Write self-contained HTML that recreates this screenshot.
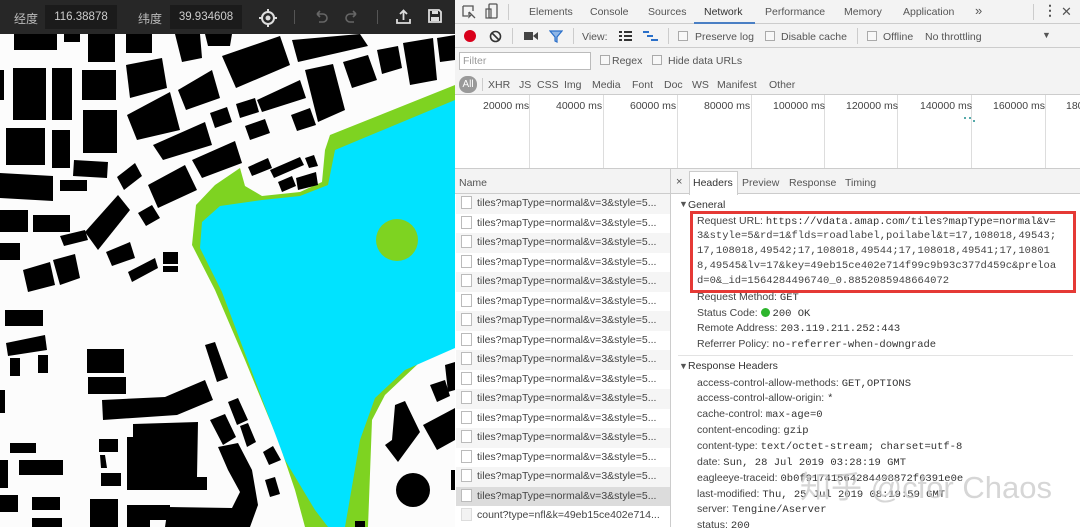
<!DOCTYPE html>
<html><head><meta charset="utf-8"><style>
*{margin:0;padding:0;box-sizing:border-box}
body{width:1080px;height:527px;overflow:hidden;position:relative;background:#fff;font-family:"Liberation Sans","Noto Sans CJK SC",sans-serif;font-size:10.5px;color:#333}
.a{position:absolute;white-space:nowrap}
.box{background:#1b1b1b;color:#ccc;height:24px;top:5px;line-height:24px;text-align:center;font-size:11.5px}
.lbl{color:#bbb;font-size:12px;top:10px}
.g{color:#555}
.cb{position:absolute;width:10px;height:10px;border:1px solid #aaa;background:#f8f8f8}
.row{position:absolute;left:456px;width:214px;height:19.5px;line-height:19.5px;color:#444;font-size:10.5px;padding-left:5px;white-space:nowrap;overflow:hidden}
.row i{display:inline-block;width:11px;height:13px;border:1px solid #bbb;background:#fff;vertical-align:-3px;margin-right:5px}
.m{font-family:"Liberation Mono",monospace;font-size:10.5px;color:#333}
.tl{position:absolute;top:100px;font-size:10.5px;color:#444}
.vl{position:absolute;top:95px;width:1px;height:73px;background:#ddd}
.kv{position:absolute;left:697px;font-size:10.5px;color:#444;white-space:nowrap}
</style></head><body>
<div class="a" style="left:0;top:0;width:455px;height:34px;background:#272727"></div>
<div class="a lbl" style="left:14px">经度</div>
<div class="a box" style="left:45px;width:72px">116.38878</div>
<div class="a lbl" style="left:138px">纬度</div>
<div class="a box" style="left:170px;width:72px">39.934608</div>
<svg class="a" style="left:258px;top:8px" width="20" height="20" viewBox="0 0 20 20"><circle cx="10" cy="10" r="6" fill="none" stroke="#ddd" stroke-width="2"/><circle cx="10" cy="10" r="2.5" fill="#ddd"/><path d="M10 1v4M10 15v4M1 10h4M15 10h4" stroke="#ddd" stroke-width="2"/></svg>
<div class="a" style="left:294px;top:10px;width:1px;height:14px;background:#555"></div>
<svg class="a" style="left:313px;top:9px" width="16" height="16" viewBox="0 0 16 16"><path d="M4 5h6a4 4 0 0 1 0 8H6M4 5l3-3M4 5l3 3" fill="none" stroke="#666" stroke-width="1.6"/></svg>
<svg class="a" style="left:344px;top:9px" width="16" height="16" viewBox="0 0 16 16"><path d="M12 5H6a4 4 0 0 0 0 8h4M12 5L9 2M12 5L9 8" fill="none" stroke="#666" stroke-width="1.6"/></svg>
<div class="a" style="left:377px;top:10px;width:1px;height:14px;background:#555"></div>
<svg class="a" style="left:395px;top:8px" width="17" height="17" viewBox="0 0 17 17"><path d="M8.5 12V3M5 6l3.5-3.5L12 6M2 11v4h13v-4" fill="none" stroke="#ddd" stroke-width="1.8"/></svg>
<svg class="a" style="left:427px;top:8px" width="16" height="16" viewBox="0 0 16 16"><path d="M2 2h10l2 2v10H2z" fill="none" stroke="#ddd" stroke-width="1.8"/><rect x="5" y="3" width="6" height="3" fill="#ddd"/><rect x="4" y="9" width="8" height="4" fill="#ddd"/></svg>

<svg class="a" style="left:0;top:34px" width="455" height="493" viewBox="0 34 455 493">
<rect x="0" y="34" width="455" height="493" fill="#fcfcfc"/>
<path d="M455 85L330 135L325 150L322 182L300 192L262 196L245 186L240 168L215 185L196 205L192 245L215 290L245 360L278 440L295 490L305 527L368 527L372 420L385 395L420 362L455 338Z" fill="#7ed321"/>
<path d="M455 100L335 150L328 185L300 196L262 200L220 206L202 222L200 248L222 292L252 372L285 460L315 510L328 527L345 527L360 440L375 398L405 370L455 348Z" fill="#00e3ff"/>
<circle cx="397" cy="240" r="21" fill="#7ed321"/>
<g fill="#000">
<rect x="14" y="34" width="43" height="16"/><rect x="64" y="34" width="16" height="8"/><rect x="88" y="34" width="27" height="28"/><rect x="126" y="34" width="26" height="19"/>
<polygon points="175,34 200,34 202,58 182,62"/><polygon points="205,34 232,34 230,46 208,46"/>
<polygon points="222,56 280,36 290,65 236,88"/><polygon points="292,40 360,34 368,46 298,62"/>
<polygon points="343,62 368,55 377,80 352,88"/><polygon points="377,50 398,46 402,68 382,74"/>
<polygon points="403,43 433,38 437,80 410,85"/><polygon points="437,38 455,35 455,60 440,62"/>
<rect x="0" y="70" width="4" height="30"/><rect x="13" y="68" width="33" height="52"/><rect x="52" y="68" width="20" height="52"/>
<rect x="82" y="70" width="34" height="30"/><rect x="83" y="110" width="34" height="43"/>
<rect x="6" y="128" width="39" height="37"/><rect x="52" y="130" width="18" height="38"/>
<polygon points="126,65 162,58 167,88 130,98"/><polygon points="127,115 170,92 180,130 137,140"/>
<polygon points="178,90 212,70 220,98 186,110"/><polygon points="305,70 333,64 345,110 318,122"/>
<polygon points="257,100 300,80 306,98 262,112"/><polygon points="210,113 227,107 232,122 215,128"/>
<polygon points="236,104 255,98 259,112 240,118"/><polygon points="245,126 265,119 270,133 250,140"/>
<polygon points="291,115 310,108 316,125 297,131"/><polygon points="153,145 205,122 212,145 163,160"/>
<polygon points="192,160 235,141 242,163 202,178"/><polygon points="148,185 185,165 197,190 158,208"/>
<polygon points="74,160 108,162 107,178 73,176"/><polygon points="0,173 53,176 53,201 0,198"/>
<rect x="60" y="180" width="27" height="11"/><polygon points="117,177 135,163 142,176 124,190"/>
<polygon points="85,232 118,195 130,210 98,250"/><polygon points="138,213 152,205 160,218 146,226"/>
<rect x="0" y="210" width="28" height="22"/><rect x="33" y="215" width="37" height="17"/>
<polygon points="248,167 268,158 272,168 252,176"/><polygon points="270,170 300,157 304,165 274,178"/><polygon points="278,182 292,176 296,186 282,192"/><polygon points="296,178 316,172 318,185 298,190"/><polygon points="305,158 314,155 318,166 309,168"/>
<rect x="0" y="243" width="20" height="17"/><polygon points="23,270 50,262 55,285 28,292"/><polygon points="53,260 75,254 80,278 60,285"/>
<polygon points="128,272 155,258 158,268 132,282"/><rect x="163" y="252" width="15" height="12"/><rect x="163" y="266" width="15" height="6"/>
<polygon points="106,252 130,242 135,258 112,266"/><polygon points="60,236 85,230 88,240 64,246"/>
<rect x="5" y="310" width="38" height="16"/><polygon points="6,343 45,335 47,350 8,356"/><rect x="10" y="358" width="10" height="18"/><rect x="38" y="355" width="10" height="18"/>
<rect x="87" y="349" width="37" height="24"/><rect x="88" y="377" width="38" height="17"/>
<polygon points="102,400 165,397 205,380 213,400 177,415 103,420"/><rect x="0" y="390" width="5" height="23"/>
<polygon points="205,345 215,342 228,378 217,382"/><polygon points="228,402 238,398 248,420 237,425"/>
<polygon points="210,420 225,414 236,437 223,445"/><polygon points="240,426 248,423 256,442 247,447"/>
<polygon points="133,424 198,422 197,477 207,477 207,490 127,490 127,437 133,437"/>
<rect x="99" y="439" width="19" height="13"/><polygon points="100,455 105,455 107,468 101,468"/><rect x="101" y="473" width="20" height="13"/>
<path d="M218 447L238 443L252 470L258 505L250 527L165 527L168 507L232 508L240 492L228 470Z"/>
<rect x="90" y="499" width="28" height="28"/><polygon points="127,505 170,505 170,520 150,520 150,527 127,527"/>
<rect x="10" y="443" width="26" height="10"/><rect x="19" y="460" width="44" height="15"/><rect x="0" y="460" width="8" height="28"/>
<rect x="0" y="495" width="18" height="17"/><rect x="32" y="497" width="28" height="13"/><rect x="32" y="518" width="30" height="9"/>
<polygon points="263,452 273,446 281,460 269,465"/><polygon points="265,480 275,477 280,494 270,497"/>
<polygon points="395,405 405,401 420,432 398,462 385,445 392,440"/><polygon points="430,385 445,380 450,396 437,402"/>
<polygon points="423,425 455,408 455,440 437,450"/><polygon points="445,365 455,362 455,390 448,392"/>
<circle cx="413" cy="490" r="17"/><rect x="451" y="470" width="4" height="20"/><rect x="355" y="521" width="10" height="6"/>
</g></svg>

<!-- devtools -->
<div class="a" style="left:455px;top:0;width:625px;height:24px;background:#f3f3f3;border-bottom:1px solid #ccc"></div>
<svg class="a" style="left:462px;top:5px" width="14" height="14"><path d="M1 1h10v5M1 1v10h5M7 7l6 6M7 7v5l2-2" fill="none" stroke="#555" stroke-width="1.3"/></svg>
<svg class="a" style="left:485px;top:3px" width="14" height="16"><rect x="4" y="1" width="8" height="14" rx="1" fill="none" stroke="#555" stroke-width="1.3"/><rect x="1" y="6" width="5" height="9" fill="none" stroke="#555" stroke-width="1.2"/></svg>
<div class="a" style="left:508px;top:4px;width:1px;height:16px;background:#ccc"></div>
<div class="a g" style="left:529px;top:6px">Elements</div>
<div class="a g" style="left:590px;top:6px">Console</div>
<div class="a g" style="left:648px;top:6px">Sources</div>
<div class="a" style="left:704px;top:6px;color:#333">Network</div>
<div class="a" style="left:694px;top:22px;width:61px;height:2px;background:#4a7fc4"></div>
<div class="a g" style="left:765px;top:6px">Performance</div>
<div class="a g" style="left:844px;top:6px">Memory</div>
<div class="a g" style="left:903px;top:6px">Application</div>
<div class="a g" style="left:975px;top:3px;font-size:13px">»</div>
<div class="a" style="left:1033px;top:4px;width:1px;height:16px;background:#ccc"></div>
<div class="a g" style="left:1043px;top:2px;font-size:14px;font-weight:bold">⋮</div>
<div class="a g" style="left:1061px;top:4px;font-size:13px">✕</div>

<div class="a" style="left:455px;top:24px;width:625px;height:24px;background:#f3f3f3;border-bottom:1px solid #ccc"></div>
<div class="a" style="left:464px;top:30px;width:12px;height:12px;border-radius:50%;background:#d9001b"></div>
<svg class="a" style="left:489px;top:30px" width="13" height="13"><circle cx="6.5" cy="6.5" r="5" fill="none" stroke="#333" stroke-width="1.6"/><path d="M3 3l7 7" stroke="#333" stroke-width="1.6"/></svg>
<div class="a" style="left:512px;top:28px;width:1px;height:16px;background:#ccc"></div>
<svg class="a" style="left:524px;top:31px" width="14" height="10"><rect x="0" y="1" width="9" height="8" fill="#444"/><path d="M9 5l5-4v8z" fill="#444"/></svg>
<svg class="a" style="left:549px;top:30px" width="14" height="13"><path d="M1 1h12L8 7v5L6 11V7z" fill="#8fb6e6" stroke="#2a6fc9" stroke-width="1.2"/></svg>
<div class="a" style="left:573px;top:28px;width:1px;height:16px;background:#ccc"></div>
<div class="a g" style="left:582px;top:31px">View:</div>
<svg class="a" style="left:619px;top:31px" width="13" height="10"><path d="M0 1h3M5 1h8M0 5h3M5 5h8M0 9h3M5 9h8" stroke="#333" stroke-width="2"/></svg>
<svg class="a" style="left:643px;top:31px" width="15" height="10"><path d="M0 1h6M4 5h6M8 9h7" stroke="#2a6fc9" stroke-width="2"/></svg>
<div class="a" style="left:668px;top:28px;width:1px;height:16px;background:#ccc"></div>
<div class="cb" style="left:678px;top:31px"></div><div class="a g" style="left:695px;top:31px">Preserve log</div>
<div class="cb" style="left:765px;top:31px"></div><div class="a g" style="left:781px;top:31px">Disable cache</div>
<div class="a" style="left:857px;top:28px;width:1px;height:16px;background:#ccc"></div>
<div class="cb" style="left:867px;top:31px"></div><div class="a g" style="left:883px;top:31px">Offline</div>
<div class="a g" style="left:925px;top:31px">No throttling</div>
<div class="a g" style="left:1042px;top:30px;font-size:9px">▼</div>

<div class="a" style="left:455px;top:48px;width:625px;height:47px;background:#f3f3f3;border-bottom:1px solid #ccc"></div>
<div class="a" style="left:459px;top:52px;width:132px;height:18px;background:#fff;border:1px solid #bbb;color:#999;padding:2px 3px">Filter</div>
<div class="cb" style="left:600px;top:55px"></div><div class="a g" style="left:612px;top:55px">Regex</div>
<div class="cb" style="left:652px;top:55px"></div><div class="a g" style="left:668px;top:55px">Hide data URLs</div>
<div class="a" style="left:459px;top:76px;width:18px;height:17px;border-radius:8px;background:#999;color:#fff;text-align:center;line-height:17px;font-size:10px">All</div>
<div class="a" style="left:482px;top:78px;width:1px;height:13px;background:#ccc"></div>
<div class="a g" style="left:488px;top:79px">XHR</div>
<div class="a g" style="left:519px;top:79px">JS</div>
<div class="a g" style="left:537px;top:79px">CSS</div>
<div class="a g" style="left:564px;top:79px">Img</div>
<div class="a g" style="left:592px;top:79px">Media</div>
<div class="a g" style="left:632px;top:79px">Font</div>
<div class="a g" style="left:664px;top:79px">Doc</div>
<div class="a g" style="left:692px;top:79px">WS</div>
<div class="a g" style="left:717px;top:79px">Manifest</div>
<div class="a g" style="left:769px;top:79px">Other</div>

<div class="vl" style="left:529px"></div><div class="vl" style="left:603px"></div><div class="vl" style="left:677px"></div><div class="vl" style="left:751px"></div><div class="vl" style="left:824px"></div><div class="vl" style="left:897px"></div><div class="vl" style="left:971px"></div><div class="vl" style="left:1045px"></div>
<div class="tl" style="left:483px">20000 ms</div>
<div class="tl" style="left:556px">40000 ms</div>
<div class="tl" style="left:630px">60000 ms</div>
<div class="tl" style="left:704px">80000 ms</div>
<div class="tl" style="left:773px">100000 ms</div>
<div class="tl" style="left:846px">120000 ms</div>
<div class="tl" style="left:920px">140000 ms</div>
<div class="tl" style="left:993px">160000 ms</div>
<div class="tl" style="left:1066px">180</div>
<div class="a" style="left:964px;top:117px;width:2px;height:2px;background:#5aa"></div>
<div class="a" style="left:969px;top:117px;width:2px;height:2px;background:#5aa"></div>
<div class="a" style="left:973px;top:120px;width:2px;height:2px;background:#5aa"></div>

<div class="a" style="left:455px;top:168px;width:625px;height:1px;background:#ccc"></div>
<div class="a" style="left:455px;top:169px;width:625px;height:25px;background:#f3f3f3;border-bottom:1px solid #ccc"></div>
<div class="a g" style="left:459px;top:177px">Name</div>
<div class="a" style="left:670px;top:169px;width:1px;height:358px;background:#ccc"></div>
<div class="a g" style="left:676px;top:176px;font-size:11px">×</div>
<div class="a" style="left:689px;top:171px;width:49px;height:24px;background:#fff;border:1px solid #ccc;border-bottom:none"></div>
<div class="a" style="left:693px;top:177px;color:#333">Headers</div>
<div class="a g" style="left:742px;top:177px">Preview</div>
<div class="a g" style="left:789px;top:177px">Response</div>
<div class="a g" style="left:845px;top:177px">Timing</div>

<div class="row" style="top:194px;background:#f5f5f5"><i></i>tiles?mapType=normal&amp;v=3&amp;style=5...</div>
<div class="row" style="top:213.5px"><i></i>tiles?mapType=normal&amp;v=3&amp;style=5...</div>
<div class="row" style="top:233px;background:#f5f5f5"><i></i>tiles?mapType=normal&amp;v=3&amp;style=5...</div>
<div class="row" style="top:252.5px"><i></i>tiles?mapType=normal&amp;v=3&amp;style=5...</div>
<div class="row" style="top:272px;background:#f5f5f5"><i></i>tiles?mapType=normal&amp;v=3&amp;style=5...</div>
<div class="row" style="top:291.5px"><i></i>tiles?mapType=normal&amp;v=3&amp;style=5...</div>
<div class="row" style="top:311px;background:#f5f5f5"><i></i>tiles?mapType=normal&amp;v=3&amp;style=5...</div>
<div class="row" style="top:330.5px"><i></i>tiles?mapType=normal&amp;v=3&amp;style=5...</div>
<div class="row" style="top:350px;background:#f5f5f5"><i></i>tiles?mapType=normal&amp;v=3&amp;style=5...</div>
<div class="row" style="top:369.5px"><i></i>tiles?mapType=normal&amp;v=3&amp;style=5...</div>
<div class="row" style="top:389px;background:#f5f5f5"><i></i>tiles?mapType=normal&amp;v=3&amp;style=5...</div>
<div class="row" style="top:408.5px"><i></i>tiles?mapType=normal&amp;v=3&amp;style=5...</div>
<div class="row" style="top:428px;background:#f5f5f5"><i></i>tiles?mapType=normal&amp;v=3&amp;style=5...</div>
<div class="row" style="top:447.5px"><i></i>tiles?mapType=normal&amp;v=3&amp;style=5...</div>
<div class="row" style="top:467px;background:#f5f5f5"><i></i>tiles?mapType=normal&amp;v=3&amp;style=5...</div>
<div class="row" style="top:486.5px;background:#dcdcdc"><i></i>tiles?mapType=normal&amp;v=3&amp;style=5...</div>
<div class="row" style="top:506px"><i style="border-color:#ddd;background:#f3f3f3"></i>count?type=nfl&amp;k=49eb15ce402e714...</div>

<div class="a" style="left:679px;top:199px;font-size:9px;color:#555">▼</div>
<div class="a" style="left:688px;top:199px;color:#333">General</div>
<div class="a" style="left:690px;top:211px;width:386px;height:82px;border:3px solid #e53935"></div>
<div class="kv" style="top:215px"><span>Request URL:</span> <span class="m">https://vdata.amap.com/tiles?mapType=normal&amp;v=</span></div>
<div class="kv m" style="top:230px">3&amp;style=5&amp;rd=1&amp;flds=roadlabel,poilabel&amp;t=17,108018,49543;</div>
<div class="kv m" style="top:245px">17,108018,49542;17,108018,49544;17,108018,49541;17,10801</div>
<div class="kv m" style="top:260px">8,49545&amp;lv=17&amp;key=49eb15ce402e714f99c9b93c377d459c&amp;preloa</div>
<div class="kv m" style="top:275px">d=0&amp;_id=1564284496740_0.8852085948664072</div>
<div class="kv" style="top:291px">Request Method: <span class="m">GET</span></div>
<div class="kv" style="top:307px">Status Code: <span style="display:inline-block;width:9px;height:9px;border-radius:50%;background:#2db52d;vertical-align:-1px"></span> <span class="m">200 OK</span></div>
<div class="kv" style="top:322px">Remote Address: <span class="m">203.119.211.252:443</span></div>
<div class="kv" style="top:338px">Referrer Policy: <span class="m">no-referrer-when-downgrade</span></div>
<div class="a" style="left:678px;top:355px;width:395px;height:1px;background:#e3e3e3"></div>
<div class="a" style="left:679px;top:361px;font-size:9px;color:#555">▼</div>
<div class="a" style="left:688px;top:360px;color:#333">Response Headers</div>
<div class="kv" style="top:377px">access-control-allow-methods: <span class="m">GET,OPTIONS</span></div>
<div class="kv" style="top:392px">access-control-allow-origin: <span class="m">*</span></div>
<div class="kv" style="top:408px">cache-control: <span class="m">max-age=0</span></div>
<div class="kv" style="top:424px">content-encoding: <span class="m">gzip</span></div>
<div class="kv" style="top:440px">content-type: <span class="m">text/octet-stream; charset=utf-8</span></div>
<div class="kv" style="top:456px">date: <span class="m">Sun, 28 Jul 2019 03:28:19 GMT</span></div>
<div class="kv" style="top:472px">eagleeye-traceid: <span class="m">0b0f9174156428449887​2f6391e0e</span></div>
<div class="kv" style="top:488px">last-modified: <span class="m">Thu, 25 Jul 2019 08:19:59 GMT</span></div>
<div class="kv" style="top:503px">server: <span class="m">Tengine/Aserver</span></div>
<div class="kv" style="top:519px">status: <span class="m">200</span></div>
<div class="a" style="left:800px;top:462px;font-size:31px;color:rgba(200,200,200,0.75)">知乎 @cfor Chaos</div>
</body></html>
